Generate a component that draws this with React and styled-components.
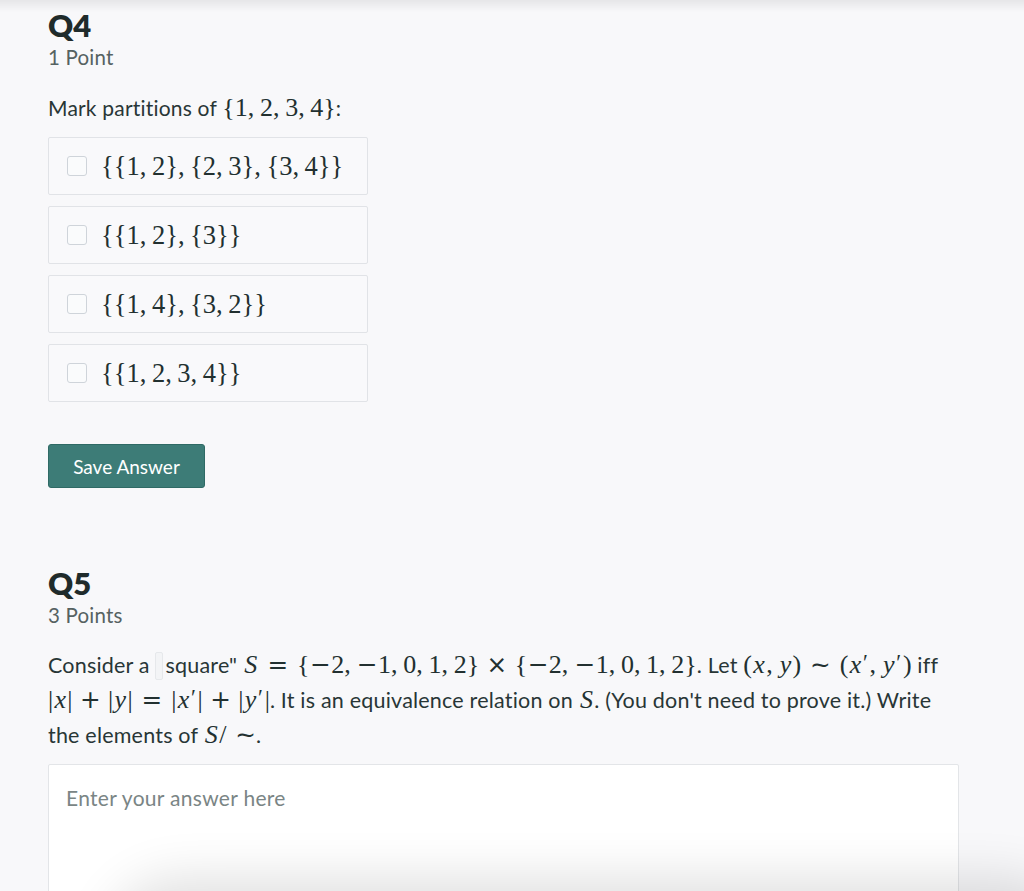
import React from 'react';
import styled, { createGlobalStyle } from 'styled-components';

const GlobalStyle = createGlobalStyle`
  html, body {
    margin: 0;
    padding: 0;
    background: #f8f8fa;
  }

  body {
    font-family: Lato, "Open Sans", Arial, sans-serif;
    color: #283636;
    overflow: hidden;
  }
`;

const OPTIONS = [
  [['1', '2'], ['2', '3'], ['3', '4']],
  [['1', '2'], ['3']],
  [['1', '4'], ['3', '2']],
  [['1', '2', '3', '4']],
];

// {−2, −1, 0, 1, 2}
const RangeSet = () => (
  <>
    {'{'}
    <Minus>−</Minus>2<Comma />
    <Minus>−</Minus>1<Comma />0<Comma />1<Comma />2{'}'}
  </>
);

const Abs = ({ children }) => (
  <>
    <Bar>|</Bar>
    {children}
    <Bar>|</Bar>
  </>
);

const App = () => {
  return (
    <>
      <GlobalStyle />
      <TopShade />
      <Page>
        <Question>
          <Title>Q4</Title>
          <Points>1 Point</Points>
          <Prompt>
            Mark partitions of{' '}
            <M>
              {'{'}1<Comma />2<Comma />3<Comma />4{'}'}
            </M>
            :
          </Prompt>
          <OptionList>
            {OPTIONS.map((sets, i) => (
              <Option key={i}>
                <Check type="checkbox" />
                <OptionMath>
                  {'{'}
                  {sets.map((set, j) => (
                    <React.Fragment key={j}>
                      {'{'}
                      {set.map((n, k) => (
                        <React.Fragment key={k}>
                          {n}
                          {k < set.length - 1 && <Comma />}
                        </React.Fragment>
                      ))}
                      {'}'}
                      {j < sets.length - 1 && <Comma />}
                    </React.Fragment>
                  ))}
                  {'}'}
                </OptionMath>
              </Option>
            ))}
          </OptionList>
          <SaveButton>Save Answer</SaveButton>
        </Question>

        <Question $gap={78}>
          <Title>Q5</Title>
          <Points>3 Points</Points>
          <Paragraph>
            Consider a <MissingGlyph />square"{' '}
            <M>
              <V>S</V><Rel>=</Rel><RangeSet /><Bin>×</Bin><RangeSet />
            </M>
            . Let{' '}
            <M>
              (<V>x</V><Comma /><V>y</V>)<Rel>∼</Rel>(<V>x</V><Prime>′</Prime><Comma /><V>y</V><Prime>′</Prime>)
            </M>{' '}
            iff
            <br />
            <M>
              <Abs><V>x</V></Abs><Bin>+</Bin><Abs><V>y</V></Abs><Rel>=</Rel>
              <Abs><V>x</V><Prime>′</Prime></Abs><Bin>+</Bin><Abs><V>y</V><Prime>′</Prime></Abs>
            </M>
            . It is an equivalence relation on <M><V>S</V></M>. (You don't need to prove it.) Write
            <br />
            the elements of <M><V>S</V>/<Rel $end>∼</Rel></M>.
          </Paragraph>
          <AnswerBox placeholder="Enter your answer here" />
        </Question>
      </Page>
      <BottomShade />
    </>
  );
};

const TopShade = styled.div`
  position: fixed;
  top: 0;
  left: 0;
  right: 0;
  height: 12px;
  background: linear-gradient(to bottom, rgba(0, 0, 0, 0.07), rgba(0, 0, 0, 0));
  pointer-events: none;
`;

const BottomShade = styled.div`
  position: fixed;
  top: 891px;
  left: 120px;
  right: -40px;
  height: 120px;
  border-radius: 70px;
  box-shadow: 0 0 50px 14px rgba(0, 0, 0, 0.12);
  pointer-events: none;
`;

const Page = styled.main`
  display: flex;
  flex-direction: column;
  padding: 8px 65px 0 48px;
`;

const Question = styled.section`
  display: flex;
  flex-direction: column;
  align-items: flex-start;
  margin-top: ${(p) => p.$gap || 0}px;
`;

const Title = styled.h2`
  margin: 0;
  font-size: 31px;
  line-height: 34px;
  font-weight: 800;
  color: #1f2b2b;
`;

const Points = styled.div`
  margin-top: 2px;
  font-size: 20.5px;
  line-height: 26px;
  letter-spacing: 0.2px;
  color: #566262;
`;

const Prompt = styled.p`
  margin: 23px 0 0;
  font-size: 21px;
  line-height: 30px;
  letter-spacing: 0.2px;
`;

const M = styled.span`
  font-family: "Liberation Serif", "DejaVu Serif", serif;
  font-size: 26px;
  line-height: 1;
  letter-spacing: 0;
  white-space: nowrap;
  color: #223030;
`;

const V = styled.i`
  font-style: italic;
  margin: 0 0.05em;
`;

const Prime = styled.span`
  display: inline-block;
  margin: 0 0.08em 0 0.02em;
  font-size: 0.85em;
  transform: translateY(-0.12em);
`;

const Bar = styled.span`
  margin: 0;
`;

const Comma = styled.span`
  margin-right: 0.22em;

  &::before {
    content: ',';
  }
`;

const Op = styled.span`
  font-family: "DejaVu Sans", sans-serif;
  font-size: 0.95em;
`;

const Minus = styled(Op)`
  margin: 0 0.02em;
`;

const Rel = styled(Op)`
  margin: 0 ${(p) => (p.$end ? '0' : '0.36em')} 0 0.36em;
`;

const Bin = styled(Op)`
  margin: 0 0.3em;
`;

const OptionList = styled.div`
  display: flex;
  flex-direction: column;
  gap: 11px;
  margin-top: 14px;
`;

const Option = styled.label`
  display: flex;
  align-items: center;
  gap: 14px;
  box-sizing: border-box;
  width: 320px;
  height: 58px;
  padding: 0 18px;
  border: 1px solid #e1e3e7;
  border-radius: 2px;
  background: #f9f9fb;
`;

const Check = styled.input`
  appearance: none;
  flex: none;
  margin: 0;
  width: 20px;
  height: 20px;
  border: 1px solid #cfd4da;
  border-radius: 3px;
  background: #fafbfc;
`;

const OptionMath = styled.span`
  font-family: "Liberation Serif", "DejaVu Serif", serif;
  font-size: 26.5px;
  color: #223030;
  white-space: nowrap;

  ${Comma} {
    margin-right: 0.21em;
  }
`;

const SaveButton = styled.button`
  margin-top: 42px;
  width: 157px;
  height: 44px;
  border: 1px solid #2f6a65;
  border-radius: 3px;
  background: #3d7c77;
  color: #ffffff;
  font-family: Lato, "Open Sans", Arial, sans-serif;
  font-size: 19px;
`;

const Paragraph = styled.p`
  margin: 20px 0 0;
  font-size: 21.5px;
  line-height: 35px;
  letter-spacing: 0.2px;
  white-space: nowrap;
`;

const MissingGlyph = styled.span`
  display: inline-block;
  width: 6px;
  height: 26px;
  margin-right: 2px;
  vertical-align: -7px;
  border: 1px solid #e6e8eb;
  border-radius: 2px;
  background: #f3f4f6;
`;

const AnswerBox = styled.textarea`
  margin-top: 11px;
  box-sizing: border-box;
  width: 911px;
  height: 160px;
  padding: 20px 17px;
  border: 1px solid #e3e5e8;
  border-radius: 2px;
  background: #ffffff;
  resize: none;
  font-family: Lato, "Open Sans", Arial, sans-serif;
  font-size: 21px;
  letter-spacing: 0.3px;
  color: #283636;

  &::placeholder {
    color: #7a8585;
  }
`;

export default App;
